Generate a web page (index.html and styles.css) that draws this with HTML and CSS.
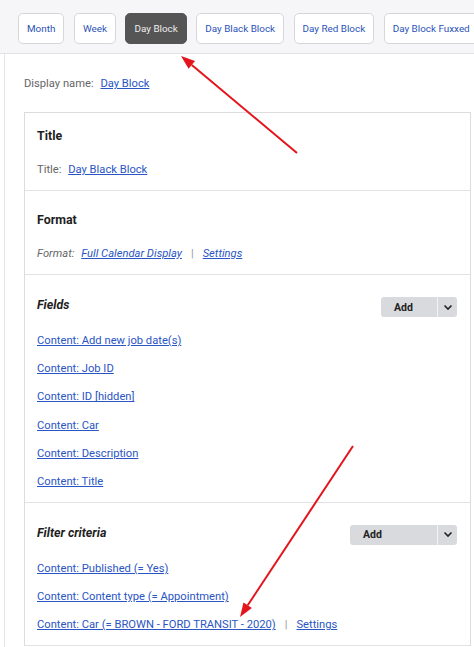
FILE: index.html
```html
<!DOCTYPE html>
<html>
<head>
<meta charset="utf-8">
<link rel="stylesheet" href="styles.css">
</head>
<body>
<div class="tabs">
  <a class="tab">Month</a>
  <a class="tab">Week</a>
  <a class="tab active">Day Block</a>
  <a class="tab">Day Black Block</a>
  <a class="tab">Day Red Block</a>
  <a class="tab">Day Block Fuxxed</a>
</div>
<div class="panel">
  <div class="display-name"><span class="label">Display name:</span> <a class="link">Day Block</a></div>
  <div class="box">
    <div class="section first">
      <div class="head"><h3>Title</h3></div>
      <div class="line"><span class="label">Title:</span> <a class="link">Day Black Block</a></div>
    </div>
    <div class="section">
      <div class="head"><h3>Format</h3></div>
      <div class="line"><span class="label it">Format:</span> <a class="link it">Full Calendar Display</a><span class="sep">|</span><a class="link it">Settings</a></div>
    </div>
    <div class="section">
      <div class="head"><h3 class="it">Fields</h3>
        <div class="addbtn"><span class="add">Add</span><span class="drop"><svg width="10" height="7" viewBox="0 0 10 7"><path d="M1.5 1.5 L5 5 L8.5 1.5" fill="none" stroke="#222" stroke-width="1.6"/></svg></span></div>
      </div>
      <ul class="list">
        <li><a class="link">Content: Add new job date(s)</a></li>
        <li><a class="link">Content: Job ID</a></li>
        <li><a class="link">Content: ID [hidden]</a></li>
        <li><a class="link">Content: Car</a></li>
        <li><a class="link">Content: Description</a></li>
        <li><a class="link">Content: Title</a></li>
      </ul>
    </div>
    <div class="section">
      <div class="head"><h3 class="it">Filter criteria</h3>
        <div class="addbtn wide"><span class="add">Add</span><span class="drop"><svg width="10" height="7" viewBox="0 0 10 7"><path d="M1.5 1.5 L5 5 L8.5 1.5" fill="none" stroke="#222" stroke-width="1.6"/></svg></span></div>
      </div>
      <ul class="list">
        <li><a class="link">Content: Published (= Yes)</a></li>
        <li><a class="link">Content: Content type (= Appointment)</a></li>
        <li><a class="link">Content: Car (= BROWN - FORD TRANSIT - 2020)</a><span class="sep">|</span><a class="link">Settings</a></li>
      </ul>
    </div>
  </div>
</div>
<svg class="arrows" width="474" height="647" viewBox="0 0 474 647">
  <line x1="297" y1="153" x2="191.8" y2="65" stroke="#e3141b" stroke-width="2"/>
  <polygon points="181,56 195,61.1 188.6,68.8" fill="#e3141b"/>
  <line x1="353" y1="446" x2="247.7" y2="605.3" stroke="#e3141b" stroke-width="2"/>
  <polygon points="240,617 251.9,608.1 243.5,602.6" fill="#e3141b"/>
</svg>
</body>
</html>
```
FILE: styles.css
```css
html, body {
  margin: 0;
  padding: 0;
  background: #fff;
  font-family: Roboto, "Liberation Sans", sans-serif;
  font-size: 11.2px;
  color: #222;
  overflow: hidden;
}
body {
  position: relative;
  width: 474px;
  height: 647px;
}
.tabs {
  height: 54px;
  box-sizing: border-box;
  background: #f6f6f8;
  border-bottom: 1px solid #e2e2e6;
  display: flex;
  gap: 9.5px;
  padding: 13px 0 0 18px;
  white-space: nowrap;
  overflow: hidden;
}
.tab {
  flex: none;
  height: 31px;
  box-sizing: border-box;
  display: flex;
  align-items: center;
  padding: 0 8px;
  background: #fff;
  border: 1px solid #d6d6da;
  border-radius: 5px;
  font-size: 9.9px;
  color: #2a52b8;
}
.tab.active {
  background: #555;
  border-color: #555;
  color: #eee;
}
.panel {
  margin-left: 4px;
  border-left: 1px solid #e6e6e8;
  padding: 22px 0 0 19px;
  height: 600px;
}
.display-name {
  line-height: 16px;
  height: 16px;
}
.label {
  color: #666;
}
.link {
  color: #2a55c4;
  text-decoration: underline;
}
.it {
  font-style: italic;
}
.display-name .link {
  margin-left: 4px;
}
.box {
  margin-top: 20px;
  width: 447px;
  box-sizing: border-box;
  border: 1px solid #dcdcde;
  border-bottom: none;
}
.section {
  padding: 21px 13px 12px 12px;
  border-bottom: 1px solid #e2e2e4;
}
.section.first {
  padding-top: 15px;
}
.head {
  display: flex;
  justify-content: space-between;
  align-items: flex-start;
  height: 16px;
}
h3 {
  margin: 0;
  font-size: 12.4px;
  line-height: 16px;
  font-weight: bold;
  color: #1e1e1e;
}
.line {
  margin-top: 18px;
  line-height: 16px;
}
.line .link {
  margin-left: 4px;
}
.sep {
  color: #999;
  margin: 0 9px;
}
.line .sep + .link {
  margin-left: 0;
}
.addbtn {
  display: flex;
  height: 20px;
  border-radius: 3px;
  overflow: hidden;
  background: #d9dadd;
  font-size: 10.5px;
  font-weight: bold;
  color: #222;
}
.addbtn .add {
  width: 56px;
  box-sizing: border-box;
  padding-left: 13px;
  display: flex;
  align-items: center;
}
.addbtn.wide .add {
  width: 87px;
}
.addbtn .drop {
  width: 19px;
  border-left: 1px solid #f2f2f4;
  display: flex;
  align-items: center;
  justify-content: center;
}
.list {
  list-style: none;
  margin: 0;
  padding: 0;
  margin-top: 20px;
  display: flex;
  flex-direction: column;
  gap: 12.2px;
}
.list li {
  line-height: 16px;
}
.section:nth-child(3) {
  padding-top: 22px;
  padding-bottom: 12px;
}
.section:nth-child(4) {
  padding-top: 22px;
}
.arrows {
  position: absolute;
  left: 0;
  top: 0;
  pointer-events: none;
}
```
